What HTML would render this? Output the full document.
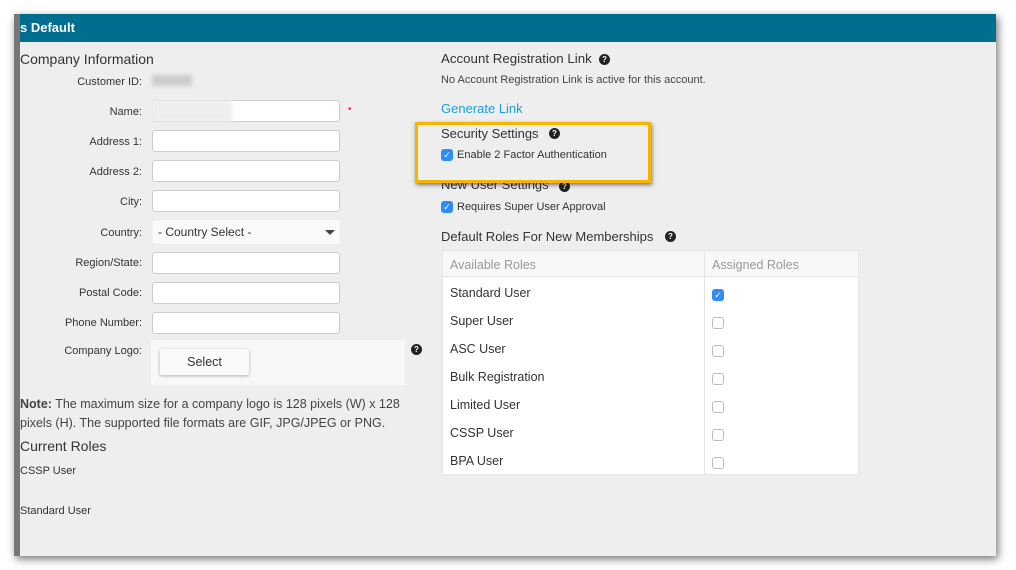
<!DOCTYPE html>
<html><head><meta charset="utf-8"><style>
*{margin:0;padding:0;box-sizing:border-box}
body{width:1016px;height:570px;background:#fff;position:relative;overflow:hidden;font-family:"Liberation Sans",sans-serif;color:#333}
.a{position:absolute;white-space:nowrap}
.win{position:absolute;left:14px;top:14px;width:982px;height:542px;background:#eeeeee;box-shadow:2px 3px 8px rgba(0,0,0,.55);border-left:6px solid #777;overflow:hidden}
.hdr{position:absolute;left:0;top:0;width:100%;height:28px;background:#006e8e;color:#fff;font-weight:bold;font-size:13px;line-height:28px;padding-left:0}
.lbl{position:absolute;font-size:11px;color:#333;text-align:right;width:130px;left:12px}
.inp{position:absolute;left:152px;width:188px;height:22px;background:#fff;border:1px solid #ccc;border-radius:3px}
.q{position:absolute;width:11px;height:11px;border-radius:50%;background:#222;color:#fff;font-size:8px;font-weight:bold;text-align:center;line-height:11px}
.cb{position:absolute;width:12px;height:12px;border-radius:3px;background:#2f8cf5;color:#fff;font-size:9px;line-height:12px;text-align:center}
.ucb{position:absolute;width:12px;height:12px;border-radius:3px;border:1px solid #bbb;background:#fff}
.row{position:absolute;left:450px;font-size:12.5px;color:#333}
</style></head><body>
<div class="win">
<div class="hdr">s Default</div>
</div>
<div class="a" style="left:20px;top:51px;font-size:14px;color:#333">Company Information</div>
<div class="lbl" style="top:76px">Customer ID:</div>
<div class="a" style="left:152px;top:75px;width:40px;height:11px;background:#ccc;filter:blur(2px)"></div>
<div class="lbl" style="top:106px">Name:</div>
<div class="inp" style="top:100px"></div>
<div class="a" style="left:150px;top:100px;width:82px;height:22px;background:#eee;filter:blur(2px)"></div>
<div class="a" style="left:348px;top:104px;color:#e33;font-size:10px">•</div>
<div class="lbl" style="top:136px">Address 1:</div><div class="inp" style="top:130px"></div>
<div class="lbl" style="top:166px">Address 2:</div><div class="inp" style="top:160px"></div>
<div class="lbl" style="top:196px">City:</div><div class="inp" style="top:190px"></div>
<div class="lbl" style="top:227px">Country:</div>
<div class="inp" style="top:220px;height:24px;border-color:#f6f6f6;background:#fafafa"></div>
<div class="a" style="left:158px;top:225px;font-size:12px;color:#333">- Country Select -</div>
<div class="a" style="left:325px;top:230px;width:0;height:0;border-left:5px solid transparent;border-right:5px solid transparent;border-top:5px solid #444"></div>
<div class="lbl" style="top:257px">Region/State:</div><div class="inp" style="top:252px"></div>
<div class="lbl" style="top:287px">Postal Code:</div><div class="inp" style="top:282px"></div>
<div class="lbl" style="top:317px">Phone Number:</div><div class="inp" style="top:312px"></div>
<div class="lbl" style="top:345px">Company Logo:</div>
<div class="a" style="left:151px;top:340px;width:254px;height:45px;background:#f8f8f8"></div>
<div class="a" style="left:160px;top:349px;width:89px;height:26px;background:#fafafa;box-shadow:0 1px 3px rgba(0,0,0,.3);border-radius:2px;font-size:12.5px;text-align:center;line-height:26px;color:#333">Select</div>
<div class="q" style="left:411px;top:344px">?</div>
<div class="a" style="left:20px;top:395px;font-size:12.5px;line-height:19px;color:#444;white-space:normal;width:395px"><b>Note:</b> The maximum size for a company logo is 128 pixels (W) x 128 pixels (H). The supported file formats are GIF, JPG/JPEG or PNG.</div>
<div class="a" style="left:20px;top:438px;font-size:14px">Current Roles</div>
<div class="a" style="left:20px;top:465px;font-size:11px">CSSP User</div>
<div class="a" style="left:20px;top:505px;font-size:11px">Standard User</div>

<div class="a" style="left:441px;top:51px;font-size:13.3px">Account Registration Link</div>
<div class="q" style="left:599px;top:54px">?</div>
<div class="a" style="left:441px;top:74px;font-size:11px;color:#444">No Account Registration Link is active for this account.</div>
<div class="a" style="left:441px;top:101px;font-size:13px;color:#1aa0d8">Generate Link</div>
<div class="a" style="left:441px;top:177px;font-size:13px;color:#333">New User Settings</div>
<div class="q" style="left:559px;top:181px">?</div>
<div class="a" style="left:415px;top:122px;width:236px;height:61px;border:3px solid #f7b500;background:#eee;box-shadow:1px 2px 4px rgba(0,0,0,.5)"></div>
<div class="a" style="left:441px;top:126px;font-size:13px">Security Settings</div>
<div class="q" style="left:549px;top:128px">?</div>
<div class="cb" style="left:441px;top:149px">✓</div>
<div class="a" style="left:457px;top:149px;font-size:11px">Enable 2 Factor Authentication</div>
<div class="cb" style="left:441px;top:201px">✓</div>
<div class="a" style="left:457px;top:201px;font-size:11px">Requires Super User Approval</div>
<div class="a" style="left:441px;top:229px;font-size:13px">Default Roles For New Memberships</div>
<div class="q" style="left:665px;top:231px">?</div>

<div class="a" style="left:442px;top:250px;width:417px;height:225px;background:#fff;border:1px solid #e4e4e4"></div>
<div class="a" style="left:443px;top:251px;width:415px;height:26px;background:#f8f8f8;border-bottom:1px solid #e4e4e4"></div>
<div class="a" style="left:704px;top:251px;width:1px;height:223px;background:#e4e4e4"></div>
<div class="a" style="left:450px;top:258px;font-size:12.5px;color:#999">Available Roles</div>
<div class="a" style="left:712px;top:258px;font-size:12.5px;color:#999">Assigned Roles</div>
<div class="row" style="top:286px">Standard User</div>
<div class="row" style="top:314px">Super User</div>
<div class="row" style="top:342px">ASC User</div>
<div class="row" style="top:370px">Bulk Registration</div>
<div class="row" style="top:398px">Limited User</div>
<div class="row" style="top:426px">CSSP User</div>
<div class="row" style="top:454px">BPA User</div>
<div class="cb" style="left:712px;top:289px">✓</div>
<div class="ucb" style="left:712px;top:317px"></div>
<div class="ucb" style="left:712px;top:345px"></div>
<div class="ucb" style="left:712px;top:373px"></div>
<div class="ucb" style="left:712px;top:401px"></div>
<div class="ucb" style="left:712px;top:429px"></div>
<div class="ucb" style="left:712px;top:457px"></div>
</body></html>
